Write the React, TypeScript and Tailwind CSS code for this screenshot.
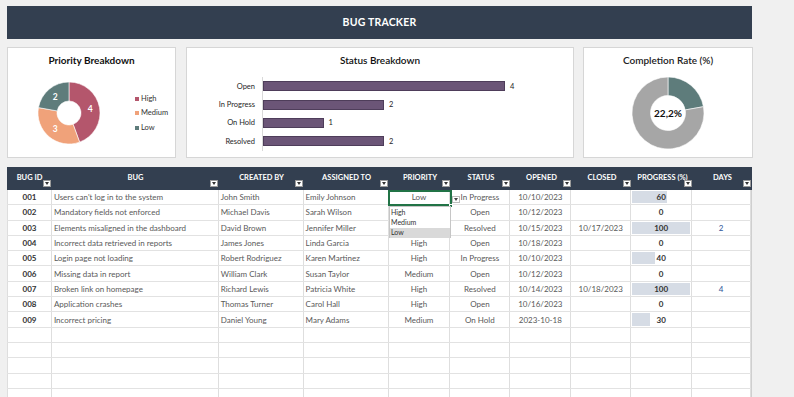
import React from "react";

const FONT = "font-['Lato','Liberation_Sans',sans-serif]";

function arc(cx: number, cy: number, r0: number, r1: number, a0: number, a1: number) {
  const rad = (a: number) => ((a - 90) * Math.PI) / 180;
  const p = (r: number, a: number) => [cx + r * Math.cos(rad(a)), cy + r * Math.sin(rad(a))];
  const large = a1 - a0 > 180 ? 1 : 0;
  const [x0, y0] = p(r1, a0);
  const [x1, y1] = p(r1, a1);
  const [x2, y2] = p(r0, a1);
  const [x3, y3] = p(r0, a0);
  return `M${x0} ${y0} A${r1} ${r1} 0 ${large} 1 ${x1} ${y1} L${x2} ${y2} A${r0} ${r0} 0 ${large} 0 ${x3} ${y3} Z`;
}

const COLS = [
  "w-[45px]",
  "w-[167px]",
  "w-[85px]",
  "w-[85px]",
  "w-[62px]",
  "w-[60px]",
  "w-[61px]",
  "w-[60px]",
  "w-[61px]",
  "w-[59px]",
];

const HEADERS = ["BUG ID", "BUG", "CREATED BY", "ASSIGNED TO", "PRIORITY", "STATUS", "OPENED", "CLOSED", "PROGRESS (%)", "DAYS"];

type Row = [string, string, string, string, string, string, string, string, string, string];

const ROWS: Row[] = [
  ["001", "Users can't log in to the system", "John Smith", "Emily Johnson", "Low", "In Progress", "10/10/2023", "", "60", ""],
  ["002", "Mandatory fields not enforced", "Michael Davis", "Sarah Wilson", "", "Open", "10/12/2023", "", "0", ""],
  ["003", "Elements misaligned in the dashboard", "David Brown", "Jennifer Miller", "", "Resolved", "10/15/2023", "10/17/2023", "100", "2"],
  ["004", "Incorrect data retrieved in reports", "James Jones", "Linda Garcia", "High", "Open", "10/18/2023", "", "0", ""],
  ["005", "Login page not loading", "Robert Rodriguez", "Karen Martinez", "High", "In Progress", "10/10/2023", "", "40", ""],
  ["006", "Missing data in report", "William Clark", "Susan Taylor", "Medium", "Open", "10/12/2023", "", "0", ""],
  ["007", "Broken link on homepage", "Richard Lewis", "Patricia White", "High", "Resolved", "10/14/2023", "10/18/2023", "100", "4"],
  ["008", "Application crashes", "Thomas Turner", "Carol Hall", "High", "Open", "10/16/2023", "", "0", ""],
  ["009", "Incorrect pricing", "Daniel Young", "Mary Adams", "Medium", "On Hold", "2023-10-18", "", "30", ""],
];

const EMPTY: Row = ["", "", "", "", "", "", "", "", "", ""];

function FilterBtn() {
  return (
    <div className="absolute right-[1px] bottom-[3px] w-[8px] h-[7px] bg-white border border-[#9a9a9a] flex items-center justify-center">
      <svg width="4" height="3" viewBox="0 0 4 3">
        <polygon points="0,0 4,0 2,3" fill="#333" />
      </svg>
    </div>
  );
}

function PriorityCard() {
  const cx = 31, cy = 31, r1 = 31, r0 = 12;
  const segs = [
    { a0: 0, a1: 160, c: "#b4566c", v: "4", la: 80 },
    { a0: 160, a1: 280, c: "#f0a27a", v: "3", la: 220 },
    { a0: 280, a1: 360, c: "#5e7c7b", v: "2", la: 320 },
  ];
  const legend = [
    { c: "#b4566c", t: "High" },
    { c: "#f0a27a", t: "Medium" },
    { c: "#5e7c7b", t: "Low" },
  ];
  return (
    <div className="w-[169px] h-[111px] bg-white border border-[#d6d6d6] flex flex-col">
      <div className="pt-[5px] h-[20px] leading-[14px] text-center text-[10px] font-bold text-[#111]">Priority Breakdown</div>
      <div className="flex items-center mt-[14px]">
        <svg width="62" height="62" viewBox="0 0 62 62" className="ml-[30px]">
          {segs.map((s, i) => {
            const a = ((s.la - 90) * Math.PI) / 180;
            const rm = (r0 + r1) / 2;
            return (
              <g key={i}>
                <path d={arc(cx, cy, r0, r1, s.a0, s.a1 - 0.01)} fill={s.c} stroke="#fff" strokeWidth="0.6" />
                <text x={cx + rm * Math.cos(a)} y={cy + rm * Math.sin(a) + 3} textAnchor="middle" fontSize="8.5" fontWeight="700" fill="#fff" fontFamily="Lato, sans-serif">
                  {s.v}
                </text>
              </g>
            );
          })}
        </svg>
        <div className="ml-[35px] flex flex-col">
          {legend.map((l) => (
            <div key={l.t} className="h-[14.5px] flex items-center gap-[2px] text-[7.5px] text-[#333]">
              <div className="w-[4px] h-[4px]" style={{ background: l.c }} />
              <span>{l.t}</span>
            </div>
          ))}
        </div>
      </div>
    </div>
  );
}

function StatusCard() {
  const data = [
    { l: "Open", v: 4 },
    { l: "In Progress", v: 2 },
    { l: "On Hold", v: 1 },
    { l: "Resolved", v: 2 },
  ];
  return (
    <div className="w-[388px] h-[111px] bg-white border border-[#d6d6d6] flex flex-col">
      <div className="pt-[5px] h-[20px] leading-[14px] text-center text-[10px] font-semibold text-[#111]">Status Breakdown</div>
      <div className="flex mt-[9px]">
        <div className="w-[68px] flex flex-col">
          {data.map((d) => (
            <div key={d.l} className="h-[18.4px] flex items-center justify-end text-[7.5px] text-[#262626]">
              {d.l}
            </div>
          ))}
        </div>
        <div className="ml-[7px] border-l border-[#d9d9d9] flex flex-col">
          {data.map((d) => (
            <div key={d.l} className="h-[18.4px] flex items-center">
              <div className="h-[10px] bg-[#6b5577] border border-[#4e3d5a]" style={{ width: d.v * 60.5 }} />
              <span className="ml-[5px] text-[7.5px] text-[#262626]">{d.v}</span>
            </div>
          ))}
        </div>
      </div>
    </div>
  );
}

function CompletionCard() {
  return (
    <div className="w-[170px] h-[111px] bg-white border border-[#d6d6d6] flex flex-col">
      <div className="pt-[5px] h-[20px] leading-[14px] text-center text-[10px] font-semibold text-[#222]">Completion Rate (%)</div>
      <div className="relative mt-[9px] mx-auto w-[72px] h-[72px]">
        <svg width="72" height="72" viewBox="0 0 72 72">
          <path d={arc(36, 36, 17.5, 36, 0, 79.9)} fill="#5e7c7b" stroke="#fff" strokeWidth="0.6" />
          <path d={arc(36, 36, 17.5, 36, 79.9, 359.99)} fill="#a6a6a6" stroke="#fff" strokeWidth="0.6" />
        </svg>
        <div className="absolute inset-0 flex items-center justify-center text-[10px] font-bold text-[#111]">22,2%</div>
      </div>
    </div>
  );
}

function Cell({ col, value }: { col: number; value: string }) {
  const base = `${COLS[col]} h-full border-r border-[#dedede] flex items-center text-[8px] leading-none overflow-hidden whitespace-nowrap`;
  if (col === 0) {
    return <div className={`${base} justify-center font-bold text-[#333] border-l`}>{value}</div>;
  }
  if (col === 1 || col === 2 || col === 3) {
    return <div className={`${base} px-[2px] text-[#595959]`}>{value}</div>;
  }
  if (col === 8) {
    const n = value === "" ? -1 : parseInt(value, 10);
    return (
      <div className={`${base} relative justify-center font-bold text-[#333]`}>
        {n > 0 && <div className="absolute left-[1px] top-[1px] bottom-[1px] bg-[#d6dce5]" style={{ width: (n / 100) * 58 }} />}
        <span className="relative">{value}</span>
      </div>
    );
  }
  if (col === 9) {
    return <div className={`${base} justify-center text-[#2f5597]`}>{value}</div>;
  }
  return <div className={`${base} justify-center text-[#595959]`}>{value}</div>;
}

export default function App() {
  const rows: Row[] = [...ROWS, EMPTY, EMPTY, EMPTY, EMPTY, EMPTY];
  return (
    <div className={`w-[794px] h-[397px] overflow-hidden bg-[#f0f0f0] ${FONT}`}>
      <div className="pt-[6px] pl-[7px]">
        <div className="w-[745px] h-[33px] bg-[#333f50] flex items-center justify-center text-white text-[10.5px] font-bold tracking-[0.2px]">
          BUG TRACKER
        </div>
      </div>
      <div className="mt-[8px] pl-[7px] flex">
        <PriorityCard />
        <div className="ml-[10px]">
          <StatusCard />
        </div>
        <div className="ml-[9px]">
          <CompletionCard />
        </div>
      </div>
      <div className="mt-[9px] ml-[7px] w-[745px] relative">
        <div className="flex h-[23px] bg-[#333f50]">
          {HEADERS.map((h, i) => (
            <div key={h} className={`${COLS[i]} relative flex items-center justify-center text-white font-bold text-[7.5px] whitespace-nowrap`}>
              <span className="-mt-[1px]">{h}</span>
              <FilterBtn />
            </div>
          ))}
        </div>
        <div className="bg-white border-r border-[#cfcfcf]">
          {rows.map((r, ri) => (
            <div key={ri} className="flex h-[15.3px] border-b border-[#e2e2e2]">
              {r.map((v, ci) => (
                <Cell key={ci} col={ci} value={v} />
              ))}
            </div>
          ))}
        </div>

        {/* selected cell */}
        <div className="absolute left-[381px] top-[22.5px] w-[63.5px] h-[16.5px] border-2 border-[#217346]" />
        <div className="absolute left-[442px] top-[36.5px] w-[4px] h-[4px] bg-[#217346] border border-white" />
        {/* dropdown arrow */}
        <div className="absolute left-[445px] top-[29px] w-[8px] h-[7px] bg-white border border-[#bdbdbd] flex items-center justify-center">
          <svg width="4" height="3" viewBox="0 0 4 3">
            <polygon points="0,0 4,0 2,3" fill="#444" />
          </svg>
        </div>
        {/* dropdown list */}
        <div className="absolute left-[382px] top-[38.7px] w-[62px] h-[32px] bg-white border border-[#c6c6c6] pt-[1px] text-[7px] text-[#333]">
          <div className="h-[10px] flex items-center px-[1px]">High</div>
          <div className="h-[10px] flex items-center px-[1px]">Medium</div>
          <div className="h-[10px] flex items-center px-[1px] bg-[#d9d9d9]">Low</div>
        </div>
      </div>
    </div>
  );
}
